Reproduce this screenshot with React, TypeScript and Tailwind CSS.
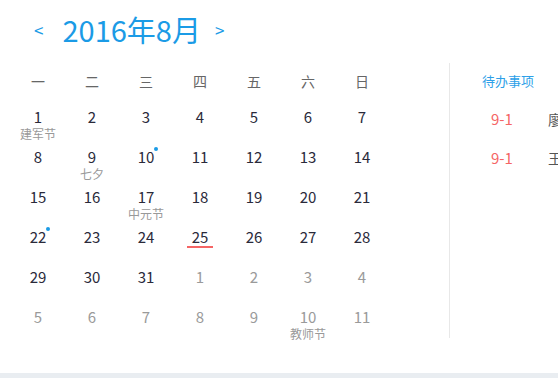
// ─── Calendar ────────────────────────────────────────────────────────────
// Month view with holidays + a side list of todos.

const weekdays = ["一", "二", "三", "四", "五", "六", "日"];

type Day = { n: number; muted?: boolean; label?: string; dot?: boolean; today?: boolean };

const days: Day[] = [
  { n: 1, label: "建军节" }, { n: 2 }, { n: 3 }, { n: 4 }, { n: 5 }, { n: 6 }, { n: 7 },
  { n: 8 }, { n: 9, label: "七夕" }, { n: 10, dot: true }, { n: 11 }, { n: 12 }, { n: 13 }, { n: 14 },
  { n: 15 }, { n: 16 }, { n: 17, label: "中元节" }, { n: 18 }, { n: 19 }, { n: 20 }, { n: 21 },
  { n: 22, dot: true }, { n: 23 }, { n: 24 }, { n: 25, today: true }, { n: 26 }, { n: 27 }, { n: 28 },
  { n: 29 }, { n: 30 }, { n: 31 }, { n: 1, muted: true }, { n: 2, muted: true }, { n: 3, muted: true }, { n: 4, muted: true },
  { n: 5, muted: true }, { n: 6, muted: true }, { n: 7, muted: true }, { n: 8, muted: true }, { n: 9, muted: true },
  { n: 10, muted: true, label: "教师节" }, { n: 11, muted: true },
];

const todos = [
  { date: "9-1", text: "廖经理生日" },
  { date: "9-1", text: "王总监会议" },
];

export default function App() {
  return (
    <div
      className="flex h-[378px] w-[558px] flex-col overflow-hidden bg-[#e9edf1]"
      style={{ fontFamily: '"Noto Sans CJK SC", "Noto Sans", sans-serif' }}
    >
      <div className="h-[373px] bg-white">
        {/* header */}
        <div className="flex h-[63px] items-start pl-[34px] pt-[10px] text-[#1b9be6]">
          <span className="mt-[10px] text-[17px] leading-[20px]">&lt;</span>
          <span className="ml-[19px] text-[29px] leading-[38px]">2016年8月</span>
          <span className="ml-[14px] mt-[10px] text-[17px] leading-[20px]">&gt;</span>
        </div>

        <div className="flex">
          {/* month grid */}
          <div className="ml-[11px] w-[378px] shrink-0">
            <div className="grid h-[35px] grid-cols-7 items-center">
              {weekdays.map((w) => (
                <span key={w} className="text-center text-[14px] leading-[18px] text-[#666]">
                  {w}
                </span>
              ))}
            </div>
            <div className="grid grid-cols-7">
              {days.map((d, i) => (
                <div key={i} className="flex h-[40px] flex-col items-center pt-[10px]">
                  <span
                    className={`relative text-[15px] leading-[18px] ${
                      d.muted ? "text-[#9a9a9a]" : "text-[#2a2a3a]"
                    }`}
                  >
                    {d.n}
                    {d.dot && (
                      <span className="absolute -right-[4px] -top-[1px] h-[4px] w-[4px] rounded-full bg-[#1b9be6]" />
                    )}
                    {d.today && (
                      <span className="absolute -left-[5px] -right-[5px] top-[18px] h-[2px] bg-[#f56565]" />
                    )}
                  </span>
                  {d.label && (
                    <span className="mt-[1px] whitespace-nowrap text-[12px] leading-[14px] text-[#999]">
                      {d.label}
                    </span>
                  )}
                </div>
              ))}
            </div>
          </div>

          {/* todo panel */}
          <div className="ml-[60px] h-[275px] min-w-0 flex-1 overflow-hidden border-l border-[#e8e8e8]">
            <div className="flex h-[35px] items-center pl-[32px] text-[13px] leading-[18px] text-[#2d9fe8]">
              待办事项
            </div>
            {todos.map((t, i) => (
              <div key={i} className="flex h-[39px] items-center whitespace-nowrap pt-[3px]">
                <span className="w-[98px] shrink-0 pl-[41px] text-[15px] text-[#f56565]">{t.date}</span>
                <span className="text-[14px] text-[#555]">{t.text}</span>
              </div>
            ))}
          </div>
        </div>
      </div>
    </div>
  );
}
